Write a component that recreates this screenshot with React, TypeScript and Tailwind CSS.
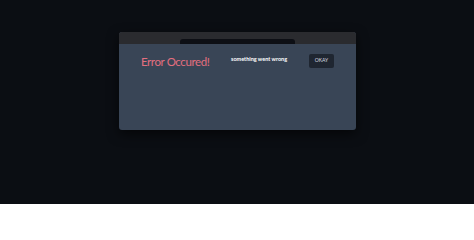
import React from "react";

export default function App() {
  return (
    <div
      className="w-[474px] h-[204px] bg-[#0b0e13] pt-[32px] pl-[119px]"
      style={{ fontFamily: 'Lato, "Noto Sans", sans-serif' }}
    >
      <div className="w-[237px] h-[98px] rounded-[3px] overflow-hidden bg-[#394556] shadow-[0_4px_12px_rgba(0,0,0,0.6)] flex flex-col">
        <div className="h-[12px] bg-[#2a2b2f] flex items-end justify-center">
          <div className="w-[115px] h-[5px] bg-[#0d0f15] rounded-t-[3px]" />
        </div>
        <div className="flex items-start pl-[22px] pt-[10px]">
          <div className="w-[90px] text-[11.5px] leading-[16px] text-[#e46f7f] tracking-[-0.4px]">
            Error Occured!
          </div>
          <div className="w-[78px] pt-[1px] text-[5.5px] leading-[8px] text-white font-bold">
            something went wrong
          </div>
          <button className="w-[25px] h-[14px] rounded-[2px] bg-[#1f2631] text-[5px] text-[#d8dbe0] flex items-center justify-center">
            OKAY
          </button>
        </div>
      </div>
    </div>
  );
}
